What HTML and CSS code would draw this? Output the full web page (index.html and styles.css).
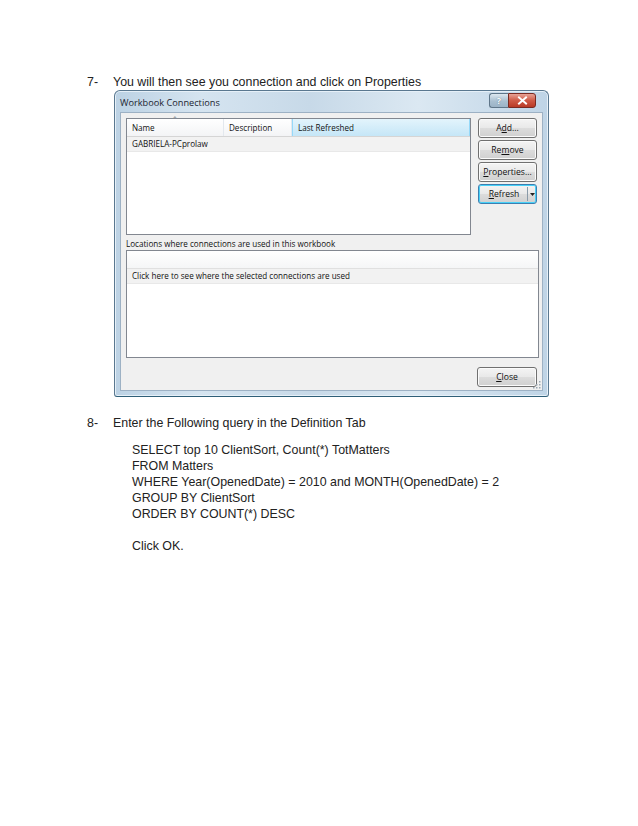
FILE: index.html
```html
<!DOCTYPE html>
<html lang="en">
<head>
  <meta charset="UTF-8">
  <title>Workbook Connections - steps</title>
  <link rel="stylesheet" href="styles.css">
</head>
<body>
  <div class="page">

    <!-- Step 7 -->
    <div class="step">
      <span class="num">7-</span>
      <span>You will then see you connection and click on Properties</span>
    </div>

    <!-- Dialog screenshot -->
    <div class="window">
      <div class="title-bar">
        <span class="title">Workbook Connections</span>
        <div class="controls">
          <span class="btn-help">?</span>
          <span class="btn-close">
            <svg width="11" height="9" viewBox="0 0 11 9"><path d="M2 1.5 L9 7.5 M9 1.5 L2 7.5" stroke="#fff" stroke-width="2" stroke-linecap="square"/></svg>
          </span>
        </div>
      </div>

      <div class="client">
        <div class="top-row">
          <div class="list conn-list">
            <div class="list-head">
              <div class="col col-name">Name<span class="sort">&#710;</span></div>
              <div class="col col-desc">Description</div>
              <div class="col col-last active">Last Refreshed</div>
            </div>
            <div class="list-row">GABRIELA-PCprolaw</div>
          </div>

          <div class="buttons">
            <div class="button">A<u>d</u>d...</div>
            <div class="button">Re<u>m</u>ove</div>
            <div class="button"><u>P</u>roperties...</div>
            <div class="button split focused">
              <span class="split-main"><u>R</u>efresh</span>
              <span class="split-arrow">
                <svg width="5" height="3" viewBox="0 0 5 3"><path d="M0 0 H5 L2.5 3 Z" fill="#222"/></svg>
              </span>
            </div>
          </div>
        </div>

        <div class="label">Locations where connections are used in this workbook</div>
        <div class="list loc-list">
          <div class="list-head empty"></div>
          <div class="list-row">Click here to see where the selected connections are used</div>
        </div>

        <div class="bottom-row">
          <div class="button"><u>C</u>lose</div>
        </div>

        <svg class="grip" width="9" height="9" viewBox="0 0 9 9">
          <rect x="7" y="1" width="1.5" height="1.5" fill="#9aa7b2"/>
          <rect x="4" y="4" width="1.5" height="1.5" fill="#9aa7b2"/>
          <rect x="7" y="4" width="1.5" height="1.5" fill="#9aa7b2"/>
          <rect x="1" y="7" width="1.5" height="1.5" fill="#9aa7b2"/>
          <rect x="4" y="7" width="1.5" height="1.5" fill="#9aa7b2"/>
          <rect x="7" y="7" width="1.5" height="1.5" fill="#9aa7b2"/>
        </svg>
      </div>
    </div>

    <!-- Step 8 -->
    <div class="step step-8">
      <span class="num">8-</span>
      <span>Enter the Following query in the Definition Tab</span>
    </div>

    <div class="query">
      <div>SELECT top 10 ClientSort, Count(*) TotMatters</div>
      <div>FROM Matters</div>
      <div>WHERE Year(OpenedDate) = 2010 and MONTH(OpenedDate) = 2</div>
      <div>GROUP BY ClientSort</div>
      <div>ORDER BY COUNT(*) DESC</div>
      <div class="blank"></div>
      <div>Click OK.</div>
    </div>

  </div>
</body>
</html>
```

FILE: styles.css
```css
/* page */
body {
  margin: 0;
  background: #ffffff;
  font-family: "Liberation Sans", Arial, sans-serif;
  font-size: 12.4px;
  color: #222222;
}

.page {
  padding: 74px 0 0 87px;
}

/* numbered steps */
.step {
  display: flex;
  line-height: 16px;
}

.step .num {
  width: 26px;
}

.step-8 {
  margin-top: 18px;
}

.query {
  margin: 11px 0 0 45px;
  line-height: 16px;
}

.query .blank {
  height: 16px;
}

/* dialog window */
.window {
  width: 433px;
  height: 305px;
  margin-left: 27px;
  border: 1px solid #5a7890;
  border-bottom-color: #2f5f78;
  border-radius: 6px 6px 3px 3px;
  background: linear-gradient(90deg, #bcd2e4 0%, #d5e4f0 20%, #c7d9e8 45%, #dbe8f2 70%, #bfd4e6 100%);
  box-shadow: inset 0 0 0 1px #e6f0f8;
  display: flex;
  flex-direction: column;
  font-family: "Open Sans", "Noto Sans", sans-serif;
  font-size: 8.1px;
  color: #111;
}

.title-bar {
  height: 21px;
  display: flex;
  align-items: flex-start;
  justify-content: space-between;
  padding: 0 12px 0 5px;
}

.title {
  margin-top: 5px;
  font-size: 9.2px;
  color: #1c2430;
}

.controls {
  display: flex;
  margin-top: 2px;
}

.btn-help,
.btn-close {
  height: 13px;
  border: 1px solid #5f7689;
  display: flex;
  align-items: center;
  justify-content: center;
}

.btn-help {
  width: 18px;
  border-radius: 3px 0 0 3px;
  border-right: none;
  background: linear-gradient(#dde8f0, #a9bfd0 55%, #9bb3c6);
  color: #ffffff;
  font-size: 9px;
  font-weight: bold;
  text-shadow: 0 0 1px #4d6579;
}

.btn-close {
  width: 26px;
  border-radius: 0 3px 3px 0;
  border-color: #7a2a22;
  background: linear-gradient(#e8a396, #cf5a46 50%, #b93a26);
}

/* client area */
.client {
  position: relative;
  flex: 1;
  margin: 0 5px 5px 5px;
  background: #f0f0f0;
  border: 1px solid #9db1c4;
  padding: 5px 5px 0 5px;
  display: flex;
  flex-direction: column;
}

.top-row {
  display: flex;
  gap: 7px;
}

.list {
  background: #ffffff;
  border: 1px solid #828790;
}

.conn-list {
  width: 343px;
  height: 115px;
}

.list-head {
  display: flex;
  height: 17px;
  background: linear-gradient(#ffffff, #f3f4f6);
  border-bottom: 1px solid #d5d5d5;
}

.list-head.empty {
  height: 17px;
  background: linear-gradient(#ffffff, #f5f6f7);
  border-bottom: 1px solid #e0e0e0;
}

.col {
  position: relative;
  line-height: 17px;
  padding-left: 5px;
  border-right: 1px solid #e3e8ee;
}

.col-name {
  width: 91px;
}

.col-desc {
  width: 62px;
}

.col-last {
  flex: 1;
  border-right: none;
}

.col.active {
  background: linear-gradient(#e3f4fc, #c5e6f7);
  border-left: 1px solid #96d9f9;
  border-right: 1px solid #96d9f9;
}

.sort {
  position: absolute;
  left: 46px;
  top: -7px;
  font-size: 9px;
  color: #6b7680;
}

.list-row {
  height: 14px;
  line-height: 14px;
  padding-left: 5px;
  background: #f2f2f2;
  border-bottom: 1px solid #e8e8e8;
}

/* buttons */
.buttons {
  display: flex;
  flex-direction: column;
  gap: 2px;
  padding-top: 0;
}

.button {
  width: 57px;
  height: 18px;
  border: 1px solid #707070;
  border-radius: 3px;
  background: linear-gradient(#f4f4f4 0%, #e9e9e9 48%, #dcdcdc 52%, #d0d0d0 100%);
  box-shadow: inset 0 0 0 1px #fbfbfb;
  display: flex;
  align-items: center;
  justify-content: center;
  color: #111;
  font-size: 8.6px;
}

.button.focused {
  border-color: #3c7fb1;
  box-shadow: inset 0 0 0 1px #48d1f8;
}

.button.split {
  justify-content: space-between;
}

.split-main {
  flex: 1;
  text-align: center;
  padding-left: 2px;
}

.split-arrow {
  width: 8px;
  height: 14px;
  border-left: 1px solid #8a9aa8;
  display: flex;
  align-items: center;
  justify-content: center;
}

.label {
  margin-top: 2px;
  line-height: 13px;
}

.loc-list {
  width: 411px;
  height: 106px;
}

.bottom-row {
  display: flex;
  justify-content: flex-end;
  margin-top: 9px;
}

.bottom-row .button {
  width: 58px;
}

.grip {
  position: absolute;
  right: 1px;
  bottom: 1px;
}
```
